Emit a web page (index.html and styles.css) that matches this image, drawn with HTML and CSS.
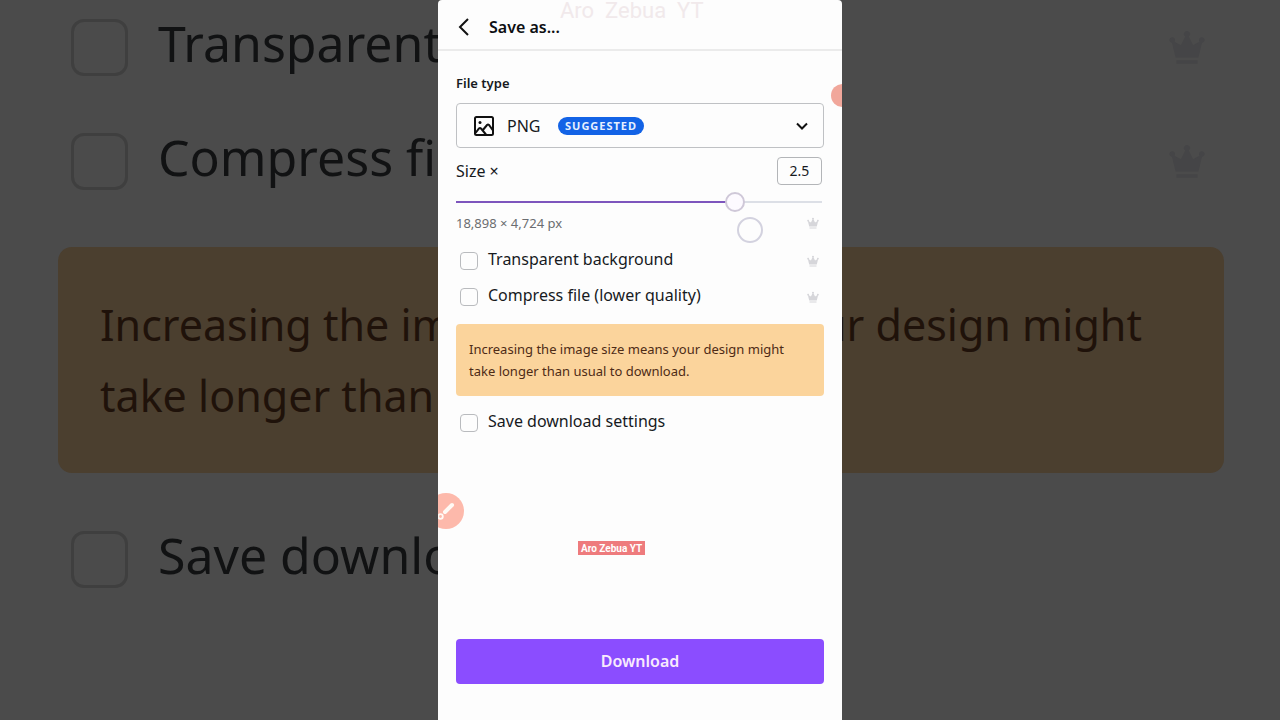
FILE: index.html
```
<!DOCTYPE html>
<html lang="en">
<head>
  <meta charset="UTF-8">
  <meta name="viewport" content="width=device-width, initial-scale=1.0">
  <title>Save as...</title>
  <link rel="stylesheet" href="styles.css">
</head>
<body>
  <svg class="defs" aria-hidden="true">
    <symbol id="crown" viewBox="0 0 24 24">
      <path d="M5.500 18 3.400 9.600A1.600 1.600 0 1 1 4.800 9L8.500 11 11 6A1.700 1.700 0 1 1 13 6L15.500 11 19.200 9A1.600 1.600 0 1 1 20.600 9.600L18.500 18ZM6 19.500h12v2H6Z"/>
    </symbol>
  </svg>

  <div class="stage">
    <!-- enlarged, dimmed copy behind the phone -->
    <div class="backdrop" aria-hidden="true" inert>
      <div class="big-row">
        <input type="checkbox" id="bgTransparent">
        <label for="bgTransparent">Transparent background</label>
        <svg class="big-crown"><use href="#crown"/></svg>
      </div>
      <div class="big-row">
        <input type="checkbox" id="bgCompress">
        <label for="bgCompress">Compress file (lower quality)</label>
        <svg class="big-crown"><use href="#crown"/></svg>
      </div>
      <p class="big-notice">Increasing the image size means your design might take longer than usual to download.</p>
      <div class="big-row">
        <input type="checkbox" id="bgSave">
        <label for="bgSave">Save download settings</label>
      </div>
    </div>

    <main class="phone">
      <header class="topbar">
        <button class="back" type="button" aria-label="Back">
          <svg viewBox="0 0 12 18"><path d="M10 1 2 9l8 8"/></svg>
        </button>
        <h1>Save as...</h1>
      </header>

      <form class="form">
        <label class="field-label" for="fileType">File type</label>
        <div class="select-box">
          <select id="fileType">
            <option>PNG</option>
          </select>
          <svg class="image-icon" viewBox="0 0 20 20">
            <rect x="1" y="1" width="18" height="18" rx="1.500"/>
            <path d="M1.500 17 5 12.500q1-1 2 0l5 6M8.500 14.500l4.500-5.500q1-1 2 0l4 5.500"/>
            <circle cx="6" cy="6.500" r="1.500"/>
          </svg>
          <span class="badge">SUGGESTED</span>
          <svg class="chevron" viewBox="0 0 12 8"><path d="m1 1.500 5 5 5-5"/></svg>
        </div>

        <div class="size-row">
          <label for="sizeRange">Size ×</label>
          <input class="size-value" type="text" value="2.5" aria-label="Size value">
        </div>
        <input class="slider" type="range" id="sizeRange" min="0.4" max="3.1" step="0.1" value="2.5">
        <div class="dims">
          <span>18,898 × 4,724 px</span>
          <svg class="crown"><use href="#crown"/></svg>
        </div>

        <div class="check-row">
          <input type="checkbox" id="transparent">
          <label for="transparent">Transparent background</label>
          <svg class="crown"><use href="#crown"/></svg>
        </div>
        <div class="check-row">
          <input type="checkbox" id="compress">
          <label for="compress">Compress file (lower quality)</label>
          <svg class="crown"><use href="#crown"/></svg>
        </div>
        <p class="notice">Increasing the image size means your design might take longer than usual to download.</p>
        <div class="check-row">
          <input type="checkbox" id="saveSettings">
          <label for="saveSettings">Save download settings</label>
        </div>

        <button class="download" type="button">Download</button>
      </form>

      <!-- things floating over the screen -->
      <span class="watermark">Aro&nbsp; Zebua&nbsp; YT</span>
      <span class="tag">Aro Zebua YT</span>
      <span class="touch"></span>
      <span class="bubble-right"></span>
      <span class="bubble-left">
        <svg viewBox="0 0 36 36">
          <path d="M17 19 24 12" stroke="#fffaf5" stroke-width="4" stroke-linecap="round"/>
          <circle cx="12.500" cy="23.500" r="2.300" fill="none" stroke="#fffaf5" stroke-width="1.800"/>
        </svg>
      </span>
    </main>
  </div>
</body>
</html>
```
FILE: styles.css
```
* {
  box-sizing: border-box;
}
body {
  margin: 0;
  background: #4b4b4b;
  color: #171a1e;
  font-family: "Noto Sans", "Open Sans", sans-serif;
  font-size: 16px;
}
h1, p {
  margin: 0;
}
button, input, select {
  font: inherit;
  color: inherit;
}
.defs {
  display: none;
}

/* both layers share one grid cell */
.stage {
  display: grid;
  grid-template-columns: 100%;
  height: 100vh;
  min-height: 640px;
  overflow: hidden;
}
.backdrop, .phone {
  grid-area: 1 / 1;
}

/* backdrop */
.backdrop {
  margin-top: -10px;
  padding: 0 56px 0 58px;
  color: #111213;
  font-size: 50px;
}
.big-row {
  display: flex;
  align-items: center;
  gap: 30px;
  height: 114px;
  padding: 0 16px 0 13px;
  white-space: nowrap;
}
.big-row label {
  flex: 1;
  line-height: 64px;
  padding-bottom: 8px;
}
.big-crown {
  width: 42px;
  height: 42px;
  fill: #454547;
}
.big-notice {
  margin: 29px 0;
  padding: 42px;
  border-radius: 14px;
  background: #4b3f2f;
  color: #1f120a;
  font-size: 43px;
  line-height: 71px;
}

input[type="checkbox"] {
  appearance: none;
  flex: none;
  width: 18px;
  height: 18px;
  margin: 0;
  border: 1px solid #b9bbbe;
  border-radius: 4px;
  background: #fdfdfd;
}
input[type="checkbox"]:checked {
  background: #8b4dff;
}
.backdrop input[type="checkbox"] {
  width: 57px;
  height: 57px;
  border: 3px solid #3f3f3f;
  border-radius: 13px;
  background: none;
}

/* phone */
.phone {
  position: relative;
  display: flex;
  flex-direction: column;
  justify-self: center;
  width: 100%;
  max-width: 404px;
  overflow: hidden;
  border-radius: 4px 4px 0 0;
  background: #fdfdfd;
}
.topbar {
  display: flex;
  align-items: center;
  gap: 19px;
  padding: 4px 20px 0;
  height: 51px;
  border-bottom: 2px solid #ebebeb;
}
.topbar h1 {
  font-size: 16px;
  font-weight: 600;
  color: #0d0f12;
}
.back {
  display: flex;
  padding: 0;
  border: 0;
  background: none;
}
.back svg {
  width: 12px;
  height: 18px;
  fill: none;
  stroke: #111;
  stroke-width: 2;
}
.form {
  flex: 1;
  display: flex;
  flex-direction: column;
  padding: 22px 18px 36px;
}
.field-label {
  font-size: 13px;
  font-weight: 600;
  line-height: 20px;
  margin-bottom: 10px;
}
.select-box {
  position: relative;
}
.select-box select {
  appearance: none;
  display: block;
  width: 100%;
  height: 45px;
  padding: 0 40px 0 50px;
  border: 1px solid #bfc1c4;
  border-radius: 4px;
  background: #fdfdfd;
}
.select-box svg, .badge {
  position: absolute;
  top: 0;
  bottom: 0;
  margin: auto 0;
  pointer-events: none;
}
.image-icon {
  left: 18px;
  width: 20px;
  height: 20px;
  fill: none;
  stroke: #111;
  stroke-width: 2;
}
.image-icon circle {
  fill: #111;
  stroke: none;
}
.badge {
  left: 102px;
  height: 18px;
  padding: 0 7px;
  border-radius: 9px;
  background: #1363e6;
  color: #e6f0ff;
  font-size: 11px;
  font-weight: 700;
  line-height: 18px;
  letter-spacing: 1px;
}
.chevron {
  right: 16px;
  width: 12px;
  height: 8px;
  fill: none;
  stroke: #111;
  stroke-width: 2;
}
.size-row {
  display: flex;
  justify-content: space-between;
  align-items: center;
  margin-top: 9px;
  padding-right: 2px;
}
.size-value {
  width: 45px;
  height: 28px;
  padding: 0 0 2px;
  border: 1px solid #b3b5b8;
  border-radius: 4px;
  background: #fdfdfd;
  text-align: center;
  font-size: 14px;
}
.slider {
  appearance: none;
  height: 20px;
  margin: 7px 2px 0 0;
  background: linear-gradient(to right, #7d55bd 76%, #dcdfe6 76%) center / 100% 2px no-repeat;
}
.slider::-webkit-slider-thumb {
  appearance: none;
  width: 20px;
  height: 20px;
  border: 2px solid #cfc8d8;
  border-radius: 50%;
  background: #fdfaff;
}
.dims {
  display: flex;
  justify-content: space-between;
  align-items: center;
  height: 22px;
  margin-bottom: 9px;
  padding-right: 4px;
  color: #6b6d70;
  font-size: 13px;
}
.crown {
  width: 14px;
  height: 14px;
  fill: #d6d6da;
}
.check-row {
  display: flex;
  align-items: center;
  gap: 10px;
  height: 36px;
  padding: 0 4px;
}
.check-row label {
  flex: 1;
  padding-bottom: 4px;
}
.notice {
  margin: 9px 0;
  padding: 14px 13px;
  border-radius: 4px;
  background: #fbd49c;
  color: #4e2b16;
  font-size: 13px;
  line-height: 22px;
}
.download {
  height: 45px;
  margin-top: auto;
  padding: 0 0 2px;
  border: 0;
  border-radius: 4px;
  background: #8b4dff;
  color: #f8eafd;
  font-weight: 600;
}

/* overlays */
.watermark, .tag, .touch, .bubble-right, .bubble-left {
  position: absolute;
  pointer-events: none;
}
.watermark {
  top: 0;
  left: 122px;
  color: #f1e9eb;
  font-family: Roboto, sans-serif;
  font-size: 22px;
  line-height: 22px;
  white-space: nowrap;
}
.tag {
  top: 541px;
  left: 140px;
  padding: 1px 3px 0;
  background: #ee7b7d;
  color: #fff;
  font-family: Roboto, sans-serif;
  font-size: 10px;
  font-weight: 700;
  line-height: 13px;
}
.touch {
  top: 217px;
  left: 299px;
  width: 26px;
  height: 26px;
  border: 2px solid #d3d2df;
  border-radius: 50%;
}
.bubble-right {
  top: 84px;
  right: -12px;
  width: 23px;
  height: 23px;
  border-radius: 50%;
  background: #f1a79b;
}
.bubble-left {
  top: 493px;
  left: -10px;
  width: 36px;
  height: 36px;
  border-radius: 50%;
  background: #fdb9ab;
}
```
